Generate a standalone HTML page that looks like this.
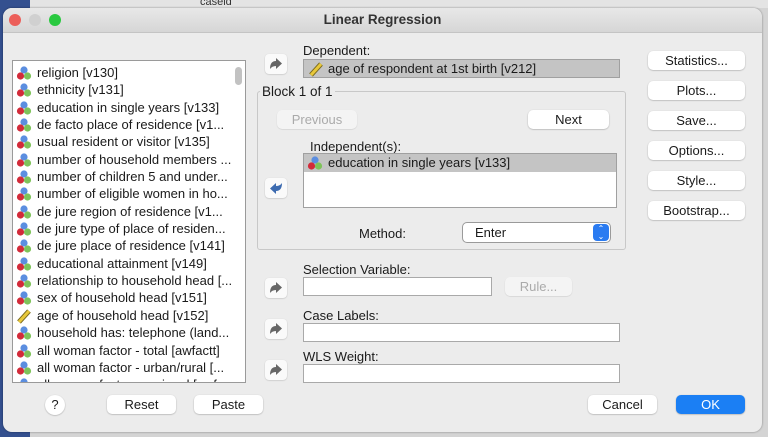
<!DOCTYPE html>
<html><head><meta charset="utf-8">
<style>
*{box-sizing:border-box;margin:0;padding:0}
body{width:768px;height:437px;overflow:hidden;background:#d4d4d4;font-family:"Liberation Sans",sans-serif;font-size:13px;color:#1a1a1a;position:relative}
.abs{position:absolute}
.win{left:3px;top:8px;width:759px;height:424px;background:#ececec;border-radius:9px;overflow:hidden;box-shadow:0 0 2px rgba(0,0,0,.4)}
.title{left:0;top:0;width:100%;height:25px;background:linear-gradient(#e8e8e8,#d6d6d6);border-bottom:1px solid #c4c4c4;text-align:center;font-weight:bold;font-size:13.5px;line-height:24px;color:#333}
.dot{width:12px;height:12px;border-radius:50%;top:6px}
.btn{background:#fff;border-radius:5px;box-shadow:0 0.5px 1.5px rgba(0,0,0,.3);text-align:center;font-size:13px;line-height:19px;height:19px}
.dis{color:#aaa;background:#f4f4f4;box-shadow:0 0.5px 1px rgba(0,0,0,.15)}
.field{background:#fff;border:1px solid #a9a9a9;height:19px}
.arr{width:22px;height:20px;background:#fafafa;border-radius:4px;box-shadow:0 0.5px 1.5px rgba(0,0,0,.2)}
.arr svg{position:absolute;left:4px;top:4px}
.list{left:9px;top:52px;width:234px;height:323px;background:#fff;border:1px solid #9a9a9a;overflow:hidden}
.row{height:17.35px;line-height:17px;white-space:nowrap;padding-left:24px;position:relative;font-size:13px}
.ic{position:absolute;left:3px;top:1px}
</style></head><body>
<div class="abs" style="left:0;top:0;width:30px;height:437px;background:#34508f"></div>
<div class="abs" style="left:30px;top:0;width:738px;height:8px;background:#e4e4e4"></div>
<div class="abs" style="left:200px;top:-4px;font-size:11px;color:#333">caseid</div>
<div class="win abs">
 <div class="title abs">Linear Regression</div>
 <div class="dot abs" style="left:6px;background:#ec5f5a"></div>
 <div class="dot abs" style="left:26px;background:#d0d0d0"></div>
 <div class="dot abs" style="left:46px;background:#2ac940"></div>

 <div class="list abs">
  <div style="padding-top:3px">
  <div class="row"><svg class="ic" width="16" height="16"><circle cx="8" cy="5" r="3.6" fill="#5b8ee0"/><circle cx="4.5" cy="11" r="3.6" fill="#d22b3a"/><circle cx="11.5" cy="11" r="3.6" fill="#7ec35a"/></svg>religion [v130]</div>
  <div class="row"><svg class="ic" width="16" height="16"><circle cx="8" cy="5" r="3.6" fill="#5b8ee0"/><circle cx="4.5" cy="11" r="3.6" fill="#d22b3a"/><circle cx="11.5" cy="11" r="3.6" fill="#7ec35a"/></svg>ethnicity [v131]</div>
  <div class="row"><svg class="ic" width="16" height="16"><circle cx="8" cy="5" r="3.6" fill="#5b8ee0"/><circle cx="4.5" cy="11" r="3.6" fill="#d22b3a"/><circle cx="11.5" cy="11" r="3.6" fill="#7ec35a"/></svg>education in single years [v133]</div>
  <div class="row"><svg class="ic" width="16" height="16"><circle cx="8" cy="5" r="3.6" fill="#5b8ee0"/><circle cx="4.5" cy="11" r="3.6" fill="#d22b3a"/><circle cx="11.5" cy="11" r="3.6" fill="#7ec35a"/></svg>de facto place of residence [v1...</div>
  <div class="row"><svg class="ic" width="16" height="16"><circle cx="8" cy="5" r="3.6" fill="#5b8ee0"/><circle cx="4.5" cy="11" r="3.6" fill="#d22b3a"/><circle cx="11.5" cy="11" r="3.6" fill="#7ec35a"/></svg>usual resident or visitor [v135]</div>
  <div class="row"><svg class="ic" width="16" height="16"><circle cx="8" cy="5" r="3.6" fill="#5b8ee0"/><circle cx="4.5" cy="11" r="3.6" fill="#d22b3a"/><circle cx="11.5" cy="11" r="3.6" fill="#7ec35a"/></svg>number of household members ...</div>
  <div class="row"><svg class="ic" width="16" height="16"><circle cx="8" cy="5" r="3.6" fill="#5b8ee0"/><circle cx="4.5" cy="11" r="3.6" fill="#d22b3a"/><circle cx="11.5" cy="11" r="3.6" fill="#7ec35a"/></svg>number of children 5 and under...</div>
  <div class="row"><svg class="ic" width="16" height="16"><circle cx="8" cy="5" r="3.6" fill="#5b8ee0"/><circle cx="4.5" cy="11" r="3.6" fill="#d22b3a"/><circle cx="11.5" cy="11" r="3.6" fill="#7ec35a"/></svg>number of eligible women in ho...</div>
  <div class="row"><svg class="ic" width="16" height="16"><circle cx="8" cy="5" r="3.6" fill="#5b8ee0"/><circle cx="4.5" cy="11" r="3.6" fill="#d22b3a"/><circle cx="11.5" cy="11" r="3.6" fill="#7ec35a"/></svg>de jure region of residence [v1...</div>
  <div class="row"><svg class="ic" width="16" height="16"><circle cx="8" cy="5" r="3.6" fill="#5b8ee0"/><circle cx="4.5" cy="11" r="3.6" fill="#d22b3a"/><circle cx="11.5" cy="11" r="3.6" fill="#7ec35a"/></svg>de jure type of place of residen...</div>
  <div class="row"><svg class="ic" width="16" height="16"><circle cx="8" cy="5" r="3.6" fill="#5b8ee0"/><circle cx="4.5" cy="11" r="3.6" fill="#d22b3a"/><circle cx="11.5" cy="11" r="3.6" fill="#7ec35a"/></svg>de jure place of residence [v141]</div>
  <div class="row"><svg class="ic" width="16" height="16"><circle cx="8" cy="5" r="3.6" fill="#5b8ee0"/><circle cx="4.5" cy="11" r="3.6" fill="#d22b3a"/><circle cx="11.5" cy="11" r="3.6" fill="#7ec35a"/></svg>educational attainment [v149]</div>
  <div class="row"><svg class="ic" width="16" height="16"><circle cx="8" cy="5" r="3.6" fill="#5b8ee0"/><circle cx="4.5" cy="11" r="3.6" fill="#d22b3a"/><circle cx="11.5" cy="11" r="3.6" fill="#7ec35a"/></svg>relationship to household head [...</div>
  <div class="row"><svg class="ic" width="16" height="16"><circle cx="8" cy="5" r="3.6" fill="#5b8ee0"/><circle cx="4.5" cy="11" r="3.6" fill="#d22b3a"/><circle cx="11.5" cy="11" r="3.6" fill="#7ec35a"/></svg>sex of household head [v151]</div>
  <div class="row"><svg class="ic" width="16" height="16"><path d="M3 14 L13 3" stroke="#7a6a20" stroke-width="5"/><path d="M3 14 L13 3" stroke="#e8c83a" stroke-width="3"/></svg>age of household head [v152]</div>
  <div class="row"><svg class="ic" width="16" height="16"><circle cx="8" cy="5" r="3.6" fill="#5b8ee0"/><circle cx="4.5" cy="11" r="3.6" fill="#d22b3a"/><circle cx="11.5" cy="11" r="3.6" fill="#7ec35a"/></svg>household has: telephone (land...</div>
  <div class="row"><svg class="ic" width="16" height="16"><circle cx="8" cy="5" r="3.6" fill="#5b8ee0"/><circle cx="4.5" cy="11" r="3.6" fill="#d22b3a"/><circle cx="11.5" cy="11" r="3.6" fill="#7ec35a"/></svg>all woman factor - total [awfactt]</div>
  <div class="row"><svg class="ic" width="16" height="16"><circle cx="8" cy="5" r="3.6" fill="#5b8ee0"/><circle cx="4.5" cy="11" r="3.6" fill="#d22b3a"/><circle cx="11.5" cy="11" r="3.6" fill="#7ec35a"/></svg>all woman factor - urban/rural [...</div>
  <div class="row"><svg class="ic" width="16" height="16"><circle cx="8" cy="5" r="3.6" fill="#5b8ee0"/><circle cx="4.5" cy="11" r="3.6" fill="#d22b3a"/><circle cx="11.5" cy="11" r="3.6" fill="#7ec35a"/></svg>all woman factor - regional [awf</div>
  </div>
  <div class="abs" style="left:222px;top:6px;width:7px;height:18px;background:#c2c2c2;border-radius:4px"></div>
 </div>

 <div class="arr abs" style="left:262px;top:46px"><svg width="14" height="12"><path d="M1 11 Q1 3 7 3 L7 0 L13 5.5 L7 11 L7 8 Q3 8 1 11Z" fill="#666"/></svg></div>
 <div class="arr abs" style="left:262px;top:170px"><svg width="14" height="12"><path d="M13 1 Q13 9 7 9 L7 12 L1 6.5 L7 1 L7 4 Q11 4 13 1Z" fill="#3d6bb0"/></svg></div>
 <div class="arr abs" style="left:262px;top:270px"><svg width="14" height="12"><path d="M1 11 Q1 3 7 3 L7 0 L13 5.5 L7 11 L7 8 Q3 8 1 11Z" fill="#666"/></svg></div>
 <div class="arr abs" style="left:262px;top:311px"><svg width="14" height="12"><path d="M1 11 Q1 3 7 3 L7 0 L13 5.5 L7 11 L7 8 Q3 8 1 11Z" fill="#666"/></svg></div>
 <div class="arr abs" style="left:262px;top:352px"><svg width="14" height="12"><path d="M1 11 Q1 3 7 3 L7 0 L13 5.5 L7 11 L7 8 Q3 8 1 11Z" fill="#666"/></svg></div>

 <div class="abs" style="left:300px;top:35px">Dependent:</div>
 <div class="abs" style="left:300px;top:51px;width:317px;height:19px;background:#c4c4c4;border:1px solid #a0a0a0;line-height:17px;padding-left:24px">age of respondent at 1st birth [v212]
  <svg class="abs" style="left:4px;top:1px" width="16" height="16"><path d="M3 14 L13 3" stroke="#7a6a20" stroke-width="5"/><path d="M3 14 L13 3" stroke="#e8c83a" stroke-width="3"/></svg></div>

 <div class="abs" style="left:254px;top:83px;width:369px;height:159px;border:1px solid #c8c8c8;border-radius:3px"></div>
 <div class="abs" style="left:257px;top:76px;background:#ececec;padding:0 2px;font-size:13.5px">Block 1 of 1</div>
 <div class="btn dis abs" style="left:274px;top:102px;width:80px">Previous</div>
 <div class="btn abs" style="left:525px;top:102px;width:81px">Next</div>
 <div class="abs" style="left:307px;top:131px">Independent(s):</div>
 <div class="abs" style="left:300px;top:145px;width:314px;height:55px;background:#fff;border:1px solid #a0a0a0">
  <div style="height:18px;background:#c4c4c4;line-height:18px;padding-left:24px;position:relative">education in single years [v133]
  <svg class="abs" style="left:3px;top:1px" width="16" height="16"><circle cx="8" cy="5" r="3.6" fill="#5b8ee0"/><circle cx="4.5" cy="11" r="3.6" fill="#d22b3a"/><circle cx="11.5" cy="11" r="3.6" fill="#7ec35a"/></svg></div>
 </div>
 <div class="abs" style="left:356px;top:218px">Method:</div>
 <div class="abs" style="left:459px;top:214px;width:149px;height:21px;background:#fff;border:1px solid #9a9a9a;border-radius:5px;line-height:19px;padding-left:12px">Enter
  <div class="abs" style="right:1px;top:1px;width:16px;height:17px;background:#2a7bf1;border-radius:4px;color:#fff;font-size:8px;line-height:8px;text-align:center;padding-top:1px">⌃<br>⌄</div></div>

 <div class="abs" style="left:300px;top:254px">Selection Variable:</div>
 <div class="field abs" style="left:300px;top:269px;width:189px"></div>
 <div class="btn dis abs" style="left:502px;top:269px;width:67px">Rule...</div>
 <div class="abs" style="left:300px;top:300px">Case Labels:</div>
 <div class="field abs" style="left:300px;top:315px;width:317px"></div>
 <div class="abs" style="left:300px;top:341px">WLS Weight:</div>
 <div class="field abs" style="left:300px;top:356px;width:317px"></div>

 <div class="btn abs" style="left:645px;top:43px;width:97px">Statistics...</div>
 <div class="btn abs" style="left:645px;top:73px;width:97px">Plots...</div>
 <div class="btn abs" style="left:645px;top:103px;width:97px">Save...</div>
 <div class="btn abs" style="left:645px;top:133px;width:97px">Options...</div>
 <div class="btn abs" style="left:645px;top:163px;width:97px">Style...</div>
 <div class="btn abs" style="left:645px;top:193px;width:97px">Bootstrap...</div>

 <div class="btn abs" style="left:42px;top:387px;width:20px;height:20px;border-radius:50%;line-height:20px">?</div>
 <div class="btn abs" style="left:104px;top:387px;width:69px">Reset</div>
 <div class="btn abs" style="left:191px;top:387px;width:69px">Paste</div>
 <div class="btn abs" style="left:585px;top:387px;width:69px">Cancel</div>
 <div class="btn abs" style="left:673px;top:387px;width:69px;background:#1b7ff4;color:#fff">OK</div>
</div>
</body></html>
